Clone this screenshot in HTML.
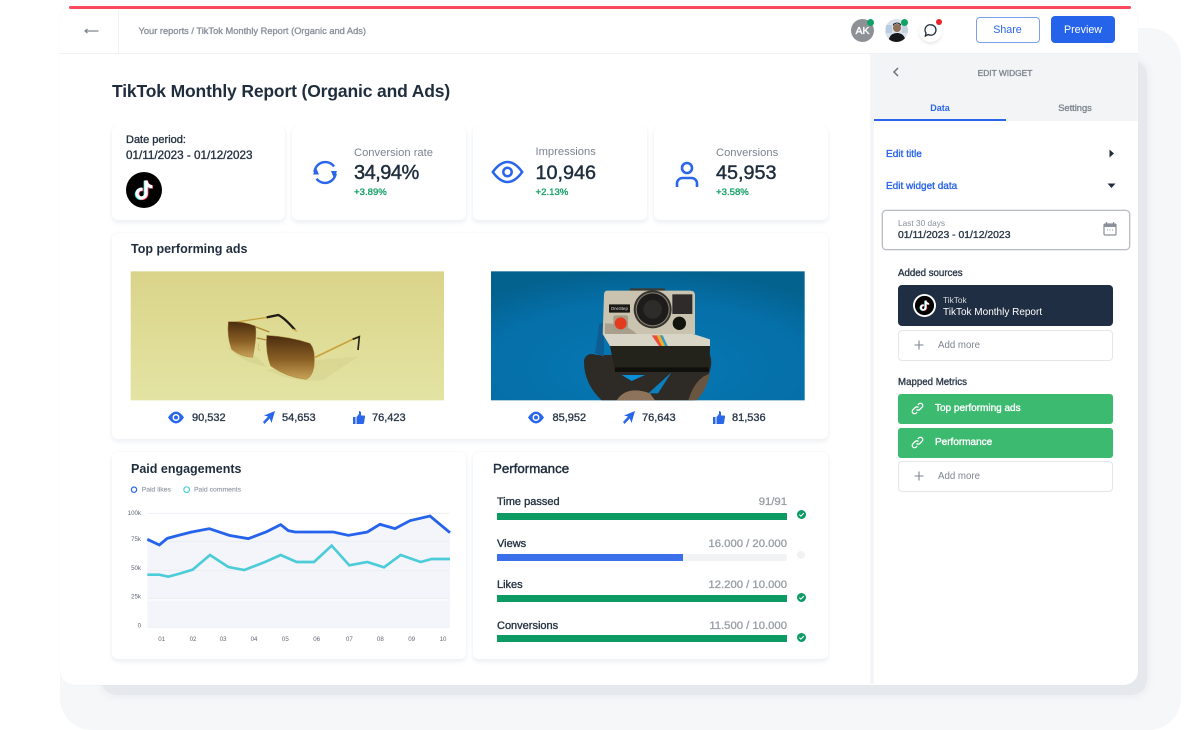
<!DOCTYPE html>
<html><head><meta charset="utf-8"><style>
html,body{margin:0;padding:0;background:#fff}
body{position:relative;width:1200px;height:730px;overflow:hidden;font-family:"Liberation Sans",sans-serif;color:#1f2d3d}
.a{position:absolute}
.t{position:absolute;white-space:nowrap;line-height:14px;height:14px}
.m{-webkit-text-stroke:.35px currentColor}
.card{position:absolute;background:#fff;border-radius:6px;box-shadow:0 3px 5px #eef0f4,0 0 3px #f3f4f7}
.gray{color:#7c8490}.grn{color:#16a267}
svg{position:absolute;overflow:visible}
</style></head><body>
<div class="a" style="left:60px;top:28px;width:1121px;height:702px;background:#f6f7f9;border-radius:32px"></div>
<div class="a" style="left:101px;top:60px;width:1046px;height:635px;background:#e5e8ec;border-radius:16px;box-shadow:0 0 6px 3px #edeff2"></div>
<div class="a" style="left:60px;top:5px;width:1078px;height:680px;background:#fff;border-radius:14px;box-shadow:0 0 1px #dfe2e6"></div>
<div class="a" style="left:69px;top:6px;width:1062px;height:2.5px;background:#fb4a5c;border-radius:2px"></div>

<!-- header -->
<div class="a" style="left:60px;top:53px;width:1078px;height:1px;background:#f0f1f3"></div>
<div class="a" style="left:118px;top:10px;width:1px;height:43px;background:#f0f1f3"></div>
<svg style="left:84px;top:26px" width="15" height="10" viewBox="0 0 15 10"><path d="M14.5 5H1M3.500 3L1 5l2.500 2" fill="none" stroke="#7f8791" stroke-width="1.300"/></svg>
<div class="t m" style="left:138.5px;top:23.500px;font-size:9.300px;color:#8b929c">Your reports / TikTok Monthly Report (Organic and Ads)</div>

<div class="a m" style="left:851px;top:19px;width:23px;height:23px;border-radius:50%;background:#8d9196;color:#fff;font-size:10.500px;line-height:24px;text-align:center">AK</div>
<div class="a" style="left:867px;top:18.5px;width:7px;height:7px;border-radius:50%;background:#10a265"></div>
<svg style="left:885px;top:19px" width="23" height="23" viewBox="0 0 23 23"><defs><clipPath id="av"><circle cx="11.5" cy="11.5" r="11.5"/></clipPath></defs><g clip-path="url(#av)"><rect width="23" height="23" fill="#d9e2ea"/><rect x="1" y="6" width="6" height="8" fill="#b9cbe0"/><rect x="17" y="5" width="6" height="9" fill="#c5d3df"/><circle cx="12" cy="9" r="4" fill="#8f6f58"/><path d="M8 7q4-5 8 0l0-2q-4-3-8 0z" fill="#222"/><path d="M3 24q1-10 9-10t9 10z" fill="#15171a"/></g></svg>
<div class="a" style="left:901px;top:18.5px;width:7px;height:7px;border-radius:50%;background:#10a265"></div>
<div class="a" style="left:919px;top:19px;width:23px;height:23px;border-radius:50%;background:#fff;box-shadow:0 2px 3px #e6e8ec"></div>
<svg style="left:923px;top:23px" width="15" height="15" viewBox="0 0 15 15"><path d="M7.8 1.8a5.2 5.2 0 0 1 0 10.4c-1 0-1.900-.3-2.700-.7L2.400 13l.6-3a5.200 5.200 0 0 1 4.800-8.200z" fill="none" stroke="#1f2d3d" stroke-width="1.300"/></svg>
<div class="a" style="left:935.5px;top:19px;width:6px;height:6px;border-radius:50%;background:#e8262a"></div>

<div class="a" style="left:975.5px;top:16.5px;width:62px;height:24px;border:1px solid #7aa0ef;border-radius:4px;color:#2a66ea;font-size:10.700px;line-height:25px;text-align:center">Share</div>
<div class="a" style="left:1051px;top:16px;width:64px;height:27px;background:#2563eb;border-radius:4px;color:#fff;font-size:10.700px;line-height:28px;text-align:center">Preview</div>

<!-- title -->
<div class="t" style="left:112px;top:83px;font-size:17.500px;letter-spacing:-.15px;color:#1f2d3d;font-weight:bold;line-height:16px">TikTok Monthly Report (Organic and Ads)</div>

<!-- KPI cards -->
<div class="card" style="left:112px;top:126px;width:173px;height:94px"></div>
<div class="card" style="left:292px;top:126px;width:174px;height:94px"></div>
<div class="card" style="left:473px;top:126px;width:174px;height:94px"></div>
<div class="card" style="left:654px;top:126px;width:174px;height:94px"></div>
<div class="a" style="left:100px;top:118px;width:740px;height:8px;background:#fff"></div>

<div class="t m" style="left:126px;top:133px;font-size:11px;color:#253342">Date period:</div>
<div class="t m" style="left:126px;top:149px;font-size:11.700px;color:#253342">01/11/2023 - 01/12/2023</div>
<svg style="left:126px;top:172px" width="36" height="36" viewBox="0 0 36 36"><circle cx="18" cy="18" r="18" fill="#000"/><g transform="translate(6.500 6.500) scale(.96)"><path transform="translate(-.8 .5)" d="M19.59 6.69a4.83 4.83 0 0 1-3.77-4.25V2h-3.45v13.67a2.89 2.89 0 0 1-5.2 1.74 2.89 2.89 0 0 1 2.31-4.64 2.93 2.93 0 0 1 .88.13V9.4a6.84 6.84 0 0 0-1-.05A6.33 6.33 0 0 0 5 20.1a6.34 6.34 0 0 0 10.86-4.43v-7a8.16 8.16 0 0 0 4.77 1.52v-3.4a4.85 4.85 0 0 1-1-.1z" fill="#25f4ee"/><path transform="translate(.8 .5)" d="M19.59 6.69a4.83 4.83 0 0 1-3.77-4.25V2h-3.45v13.67a2.89 2.89 0 0 1-5.2 1.74 2.89 2.89 0 0 1 2.31-4.64 2.93 2.93 0 0 1 .88.13V9.4a6.84 6.84 0 0 0-1-.05A6.33 6.33 0 0 0 5 20.1a6.34 6.34 0 0 0 10.86-4.43v-7a8.16 8.16 0 0 0 4.77 1.52v-3.4a4.85 4.85 0 0 1-1-.1z" fill="#fe2c55"/><path d="M19.59 6.69a4.83 4.83 0 0 1-3.77-4.25V2h-3.45v13.67a2.89 2.89 0 0 1-5.2 1.74 2.89 2.89 0 0 1 2.31-4.64 2.93 2.93 0 0 1 .88.13V9.4a6.84 6.84 0 0 0-1-.05A6.33 6.33 0 0 0 5 20.1a6.34 6.34 0 0 0 10.86-4.43v-7a8.16 8.16 0 0 0 4.77 1.52v-3.4a4.85 4.85 0 0 1-1-.1z" fill="#fff"/></g></svg>

<div class="t gray" style="left:354px;top:146px;font-size:11.200px">Conversion rate</div>
<div class="t" style="left:354px;top:166px;font-size:20px;letter-spacing:-.5px;color:#1f2d3d;-webkit-text-stroke:.45px #1f2d3d">34,94%</div>
<div class="t m grn" style="left:354px;top:186px;font-size:9.600px">+3.89%</div>
<svg style="left:311px;top:158px" width="28" height="28" viewBox="0 0 28 28"><g fill="none" stroke="#2a66ea" stroke-width="2.400"><path d="M3.500 14A10.800 10.800 0 0 1 23 8.500"/><path d="M24.700 15.500A10.800 10.800 0 0 1 5.500 20.800"/></g><path d="M2 16.500H8L5 9.500z" fill="#2a66ea"/><path d="M20 13H26L23 20.500z" fill="#2a66ea"/></svg>

<div class="t gray" style="left:535.5px;top:145px;font-size:11.200px">Impressions</div>
<div class="t" style="left:535.5px;top:166px;font-size:19.800px;color:#1f2d3d;-webkit-text-stroke:.45px #1f2d3d">10,946</div>
<div class="t m grn" style="left:535.5px;top:186px;font-size:9.600px">+2.13%</div>
<svg style="left:491px;top:160px" width="33" height="24" viewBox="0 0 33 24"><path d="M1.800 12Q9 2 16.500 2T31.200 12Q24 22 16.500 22T1.800 12z" fill="none" stroke="#2a66ea" stroke-width="2.500"/><circle cx="16.500" cy="12" r="4.200" fill="none" stroke="#2a66ea" stroke-width="2.500"/></svg>

<div class="t gray" style="left:716px;top:146px;font-size:11.200px">Conversions</div>
<div class="t" style="left:716px;top:166px;font-size:19.800px;color:#1f2d3d;-webkit-text-stroke:.45px #1f2d3d">45,953</div>
<div class="t m grn" style="left:716px;top:186px;font-size:9.600px">+3.58%</div>
<svg style="left:674px;top:160px" width="26" height="28" viewBox="0 0 26 28"><circle cx="13" cy="8" r="5" fill="none" stroke="#2a66ea" stroke-width="2.600"/><path d="M3 27v-3.500a5.500 5.500 0 0 1 5.500-5.500h9a5.500 5.500 0 0 1 5.500 5.500V27" fill="none" stroke="#2a66ea" stroke-width="2.600"/></svg>

<!-- Top performing ads -->
<div class="card" style="left:112px;top:233px;width:716px;height:206px"></div>
<div class="t" style="left:131px;top:242px;font-size:12.500px;font-weight:bold;color:#1f2d3d">Top performing ads</div>

<svg style="left:110px;top:260px" width="360" height="190" viewBox="0 0 1080 570">
<defs>
<linearGradient id="yb" x1="0" y1="0" x2="0" y2="1"><stop offset="0" stop-color="#dad48a"/><stop offset=".5" stop-color="#dfdc96"/><stop offset="1" stop-color="#e3e3a3"/></linearGradient>
<linearGradient id="ln" x1="0" y1="0" x2="0" y2="1"><stop offset="0" stop-color="#4a2c0e"/><stop offset=".55" stop-color="#8a5f25"/><stop offset="1" stop-color="#c9a358"/></linearGradient>
</defs>
<rect x="62" y="34" width="940" height="387" fill="url(#yb)"/>
<path d="M470 330Q560 372 640 360L745 290 620 300z" fill="#c9c67e" opacity=".3"/>
<path d="M350 260Q400 310 470 320L440 290z" fill="#c9c67e" opacity=".35"/>
<path d="M380 186L472 172" stroke="#c9a23c" stroke-width="4" fill="none"/>
<path d="M470 172L505 165Q525 175 555 210" stroke="#1e1a12" stroke-width="7" fill="none"/>
<path d="M548 208l14 6" stroke="#d8b45a" stroke-width="5"/>
<path d="M615 292L732 236" stroke="#c9a23c" stroke-width="5" fill="none"/>
<path d="M728 238L748 230 744 270" stroke="#2a2315" stroke-width="5" fill="none"/>
<path d="M435 200L478 216M440 234L470 240" stroke="#b08a35" stroke-width="4" fill="none"/>
<path d="M355 185Q400 183 436 198 442 225 428 292 390 290 365 268 350 230 355 185z" fill="url(#ln)" stroke="#a8863c" stroke-width="1.500"/>
<path d="M470 226Q540 230 600 250 618 270 612 320 606 352 588 358 530 352 482 318 466 280 470 226z" fill="url(#ln)" stroke="#a8863c" stroke-width="1.500"/>
<path d="M446 250l-2 18 8 4" stroke="#d6c27a" stroke-width="3" fill="none"/>
</svg>

<svg style="left:480px;top:260px" width="350" height="190" viewBox="0 0 1050 570">
<defs>
<radialGradient id="bl" cx=".5" cy=".75" r=".75"><stop offset="0" stop-color="#0578b5"/><stop offset=".7" stop-color="#056fa8"/><stop offset="1" stop-color="#04628f"/></radialGradient>
<clipPath id="cc"><rect x="33" y="34" width="941" height="387"/></clipPath>
</defs>
<rect x="33" y="34" width="941" height="387" fill="url(#bl)"/>
<g clip-path="url(#cc)">
<path d="M312 300Q320 275 350 285L690 285Q700 310 685 345 670 390 640 421L365 421Q310 370 312 300z" fill="#2e2a26"/>
<path d="M410 421Q440 375 510 400L525 421z" fill="#8d7359"/>
<path d="M625 421Q640 370 670 350L690 340Q680 390 650 421z" fill="#6a5540"/>
<path d="M425 345l70 0-40 18z" fill="#0a8ed6"/><path d="M505 400l55-50 14-12-40 62z" fill="#0c7fbd"/>
<path d="M358 190L372 190 372 290 345 280z" fill="#0d5c92"/>
<rect x="450" y="85" width="105" height="12" fill="#3a3a36"/>
<path d="M382 92H630Q645 92 645 105V222H368L372 105Q372 92 382 92z" fill="#c9c3b0"/>
<path d="M375 190Q440 190 470 222H375z" fill="#a89f8c"/>
<path d="M368 222H640L690 238V258H390z" fill="#d8d4c6"/>
<path d="M390 258H690L688 335H405z" fill="#23231c"/>
<path d="M405 322H686V336H405z" fill="#0f0f0c"/>
<path d="M515 226l32 0 16 32-26 0z" fill="#e9503a"/><path d="M530 226l10 0 16 32-11 0z" fill="#e8b02e"/><path d="M541 226l7 0 15 32-8 0z" fill="#2a9fc9"/>
<circle cx="518" cy="148" r="57" fill="#35332e"/><circle cx="518" cy="148" r="51" fill="#8d8778"/><circle cx="518" cy="148" r="48" fill="#1d1c1a"/><circle cx="518" cy="148" r="28" fill="#2d2c28"/>
<rect x="577" y="103" width="60" height="59" fill="#2e2b2b"/>
<circle cx="598" cy="190" r="20" fill="#14140f"/>
<rect x="387" y="133" width="63" height="25" rx="2" fill="#1b1a17"/>
<text x="418" y="150" font-size="13" fill="#ddd" text-anchor="middle" font-family="Liberation Sans">OneStep</text>
<rect x="400" y="166" width="44" height="46" rx="6" fill="#a59c88"/><circle cx="422" cy="190" r="18" fill="#e43a1e"/>
</g>
</svg>

<!-- stats -->
<svg style="left:168px;top:411px" width="16" height="13" viewBox="0 0 16 13"><path fill-rule="evenodd" d="M0 6.500Q4 .5 8 .5t8 6q-4 6-8 6t-8-6zM8 3a3.500 3.500 0 1 0 0 7 3.500 3.500 0 0 0 0-7z" fill="#2a66ea"/><circle cx="8" cy="6.500" r="2" fill="#2a66ea"/></svg>
<div class="t m" style="left:192px;top:410.500px;font-size:11px;color:#2b3848">90,532</div>
<svg style="left:263px;top:411px" width="12" height="13" viewBox="0 0 12 13"><path d="M12 0L8.500 12 6.800 7.500 1.500 13 0 11 5 5.500 1 4.500z" fill="#2a66ea"/></svg>
<div class="t m" style="left:282px;top:410.500px;font-size:11px;color:#2b3848">54,653</div>
<svg style="left:353px;top:411px" width="12" height="13" viewBox="0 0 12 13"><path d="M0 6h2.500v7H0zM3.500 6L6 3V0q2 0 2 2v2.500h3q1.200 0 1 1.500l-1 6q-.2 1-1.200 1H3.500z" fill="#2a66ea"/></svg>
<div class="t m" style="left:372px;top:410.500px;font-size:11px;color:#2b3848">76,423</div>

<svg style="left:528px;top:411px" width="16" height="13" viewBox="0 0 16 13"><path fill-rule="evenodd" d="M0 6.500Q4 .5 8 .5t8 6q-4 6-8 6t-8-6zM8 3a3.500 3.500 0 1 0 0 7 3.500 3.500 0 0 0 0-7z" fill="#2a66ea"/><circle cx="8" cy="6.500" r="2" fill="#2a66ea"/></svg>
<div class="t m" style="left:552.5px;top:410.500px;font-size:11px;color:#2b3848">85,952</div>
<svg style="left:623px;top:411px" width="12" height="13" viewBox="0 0 12 13"><path d="M12 0L8.500 12 6.800 7.500 1.500 13 0 11 5 5.500 1 4.500z" fill="#2a66ea"/></svg>
<div class="t m" style="left:642px;top:410.500px;font-size:11px;color:#2b3848">76,643</div>
<svg style="left:713px;top:411px" width="12" height="13" viewBox="0 0 12 13"><path d="M0 6h2.500v7H0zM3.500 6L6 3V0q2 0 2 2v2.500h3q1.200 0 1 1.500l-1 6q-.2 1-1.200 1H3.500z" fill="#2a66ea"/></svg>
<div class="t m" style="left:732px;top:410.500px;font-size:11px;color:#2b3848">81,536</div>

<!-- Paid engagements -->
<div class="card" style="left:112px;top:452px;width:354px;height:207px"></div>
<div class="t" style="left:131px;top:462px;font-size:12.500px;font-weight:bold;color:#1f2d3d">Paid engagements</div>
<svg style="left:110px;top:450px" width="360" height="220" viewBox="0 0 1080 660" font-family="Liberation Sans">
<circle cx="72" cy="119" r="8" fill="none" stroke="#2a66ea" stroke-width="3.500"/>
<text x="95" y="125" font-size="20.500" fill="#9aa0aa" stroke="#9aa0aa" stroke-width=".6">Paid likes</text>
<circle cx="230" cy="119" r="8.500" fill="none" stroke="#4ccbd8" stroke-width="3.500"/>
<text x="252" y="125" font-size="20.500" fill="#9aa0aa" stroke="#9aa0aa" stroke-width=".6">Paid comments</text>
<path d="M112 268L148 285 172 265 205 256 245 246 298 236 358 256 415 266 470 245 512 224 535 242 555 246 610 246 670 246 715 256 772 246 810 223 855 236 900 212 960 198 1020 248V533H112z" fill="#f4f5fa"/>
<g stroke="#eceef2" stroke-width="3" fill="none"><path d="M112 190H1018M112 275H1018M112 361H1018M112 445H1018"/></g>
<path d="M112 450H1018" stroke="#fff" stroke-width="3"/>
<path d="M112 533H1018" stroke="#eceef2" stroke-width="1.500"/>
<path d="M112 268L148 285 172 265 205 256 245 246 298 236 358 256 415 266 470 245 512 224 535 242 555 246 610 246 670 246 715 256 772 246 810 223 855 236 900 212 960 198 1020 248" fill="none" stroke="#2563eb" stroke-width="8.500"/>
<path d="M112 374L148 374 175 380 205 372 248 359 300 315 355 351 403 360 465 336 512 315 560 336 612 336 665 287 718 346 772 336 822 352 872 315 932 336 965 327 1020 327" fill="none" stroke="#4ccbd8" stroke-width="8"/>
<g font-size="18.500" fill="#5f6773" text-anchor="end">
<text x="93" y="195">100k</text><text x="93" y="273">75k</text><text x="93" y="360">50k</text><text x="93" y="446">25k</text><text x="93" y="532">0</text></g>
<g font-size="18.500" fill="#5f6773" text-anchor="middle">
<text x="155" y="573">01</text><text x="249" y="573">02</text><text x="339" y="573">03</text><text x="432" y="573">04</text><text x="526" y="573">05</text><text x="620" y="573">06</text><text x="718" y="573">07</text><text x="811" y="573">08</text><text x="905" y="573">09</text><text x="999" y="573">10</text></g>
</svg>

<!-- Performance -->
<div class="card" style="left:473px;top:452px;width:355px;height:207px"></div>
<div class="t" style="left:493px;top:462px;font-size:13.300px;-webkit-text-stroke:.45px #1f2d3d;color:#1f2d3d">Performance</div>

<div class="t m" style="left:497px;top:494.500px;font-size:11px;color:#253342">Time passed</div>
<div class="t m" style="right:413px;top:494.500px;font-size:11.300px;color:#9a9fa6">91/91</div>
<div class="a" style="left:497px;top:512.5px;width:290px;height:7px;background:#0b9b63"></div>

<div class="t m" style="left:497px;top:536.500px;font-size:11px;color:#253342">Views</div>
<div class="t m" style="right:413px;top:536.500px;font-size:11.300px;color:#9a9fa6">16.000 / 20.000</div>
<div class="a" style="left:497px;top:554px;width:290px;height:7px;background:#f2f3f5;border-radius:2px"></div>
<div class="a" style="left:497px;top:554px;width:186px;height:7px;background:#3b70ea"></div>

<div class="t m" style="left:497px;top:577.500px;font-size:11px;color:#253342">Likes</div>
<div class="t m" style="right:413px;top:577.500px;font-size:11.300px;color:#9a9fa6">12.200 / 10.000</div>
<div class="a" style="left:497px;top:594.500px;width:290px;height:7px;background:#0b9b63"></div>

<div class="t m" style="left:497px;top:618.500px;font-size:11px;color:#253342">Conversions</div>
<div class="t m" style="right:413px;top:618.500px;font-size:11.300px;color:#9a9fa6">11.500 / 10.000</div>
<div class="a" style="left:497px;top:635px;width:290px;height:7px;background:#0b9b63"></div>

<svg style="left:796.500px;top:510px" width="9" height="9" viewBox="0 0 9 9"><circle cx="4.500" cy="4.500" r="4.500" fill="#0b9b63"/><path d="M2.300 4.600l1.600 1.500 2.900-3" fill="none" stroke="#fff" stroke-width="1.100"/></svg>
<div class="a" style="left:796.500px;top:551px;width:8px;height:8px;border-radius:50%;background:#f0f1f3"></div>
<svg style="left:796.500px;top:592.500px" width="9" height="9" viewBox="0 0 9 9"><circle cx="4.500" cy="4.500" r="4.500" fill="#0b9b63"/><path d="M2.300 4.600l1.600 1.500 2.900-3" fill="none" stroke="#fff" stroke-width="1.100"/></svg>
<svg style="left:796.500px;top:632.500px" width="9" height="9" viewBox="0 0 9 9"><circle cx="4.500" cy="4.500" r="4.500" fill="#0b9b63"/><path d="M2.300 4.600l1.600 1.500 2.900-3" fill="none" stroke="#fff" stroke-width="1.100"/></svg>

<!-- Right panel -->
<div class="a" style="left:870px;top:54px;width:4px;height:630px;background:#f4f5f8"></div>
<div class="a" style="left:874px;top:54px;width:264px;height:67px;background:#f3f4f6"></div>
<svg style="left:892px;top:67px" width="8" height="10" viewBox="0 0 8 10"><path d="M6 1L2 5l4 4" fill="none" stroke="#6b727c" stroke-width="1.500"/></svg>
<div class="t m" style="left:874px;top:65.500px;width:262px;text-align:center;font-size:8.400px;color:#7f8791">EDIT WIDGET</div>
<div class="t" style="left:874px;top:101px;width:132px;text-align:center;font-size:9px;font-weight:bold;color:#2a66ea">Data</div>
<div class="t m" style="left:1006px;top:101px;width:138px;text-align:center;font-size:9.300px;color:#7f8791">Settings</div>
<div class="a" style="left:874px;top:119px;width:132px;height:2px;background:#2a66ea"></div>

<div class="t m" style="left:886px;top:147.500px;font-size:10.100px;color:#2a66ea">Edit title</div>
<svg style="left:1108px;top:149px" width="7" height="9" viewBox="0 0 7 9"><path d="M1.500.5L6 4.500 1.500 8.500z" fill="#1f2d3d"/></svg>
<div class="t m" style="left:886px;top:179.500px;font-size:10px;color:#2a66ea">Edit widget data</div>
<svg style="left:1107px;top:183px" width="9" height="6" viewBox="0 0 9 6"><path d="M.5.500h8L4.500 5z" fill="#1f2d3d"/></svg>

<div class="a" style="left:882px;top:210px;width:246px;height:38px;border:1px solid #b8bcc2;border-radius:4px;box-shadow:0 0 0 .4px #c8ccd1"></div>
<div class="t" style="left:898px;top:216px;font-size:8.300px;color:#8a9099">Last 30 days</div>
<div class="t m" style="left:898px;top:228.500px;font-size:10.400px;color:#2b3848">01/11/2023 - 01/12/2023</div>
<svg style="left:1103px;top:222px" width="14" height="14" viewBox="0 0 14 14"><rect x="1" y="2" width="12" height="11" rx="1" fill="#fff" stroke="#8a9099" stroke-width="1.200"/><rect x="1" y="2" width="12" height="3" fill="#8a9099"/><path d="M3.500 0v3M10.500 0v3" stroke="#8a9099" stroke-width="1.200"/><path d="M4 8h1M6.500 8h1M9 8h1" stroke="#8a9099" stroke-width="1"/></svg>

<div class="t m" style="left:898px;top:266.500px;font-size:9.700px;color:#2d3a4a">Added sources</div>
<div class="a" style="left:897.5px;top:285px;width:215.500px;height:41px;background:#1f2e42;border-radius:4px"></div>
<svg style="left:913px;top:294px" width="23" height="23" viewBox="0 0 36 36"><circle cx="18" cy="18" r="18" fill="#fff"/><circle cx="18" cy="18" r="15" fill="#000"/><g transform="translate(8.500 8.500) scale(.8)"><path transform="translate(-1 .5)" d="M19.59 6.69a4.83 4.83 0 0 1-3.77-4.25V2h-3.45v13.67a2.89 2.89 0 0 1-5.2 1.74 2.89 2.89 0 0 1 2.31-4.64 2.93 2.93 0 0 1 .88.13V9.4a6.84 6.84 0 0 0-1-.05A6.33 6.33 0 0 0 5 20.1a6.34 6.34 0 0 0 10.86-4.43v-7a8.16 8.16 0 0 0 4.77 1.52v-3.4a4.85 4.85 0 0 1-1-.1z" fill="#25f4ee"/><path transform="translate(1 .5)" d="M19.59 6.69a4.83 4.83 0 0 1-3.77-4.25V2h-3.45v13.67a2.89 2.89 0 0 1-5.2 1.74 2.89 2.89 0 0 1 2.31-4.64 2.93 2.93 0 0 1 .88.13V9.4a6.84 6.84 0 0 0-1-.05A6.33 6.33 0 0 0 5 20.1a6.34 6.34 0 0 0 10.86-4.43v-7a8.16 8.16 0 0 0 4.77 1.52v-3.4a4.85 4.85 0 0 1-1-.1z" fill="#fe2c55"/><path d="M19.59 6.69a4.83 4.83 0 0 1-3.77-4.25V2h-3.45v13.67a2.89 2.89 0 0 1-5.2 1.74 2.89 2.89 0 0 1 2.31-4.64 2.93 2.93 0 0 1 .88.13V9.4a6.84 6.84 0 0 0-1-.05A6.33 6.33 0 0 0 5 20.1a6.34 6.34 0 0 0 10.86-4.43v-7a8.16 8.16 0 0 0 4.77 1.52v-3.4a4.85 4.85 0 0 1-1-.1z" fill="#fff"/></g></svg>
<div class="t" style="left:943px;top:292.500px;font-size:8.300px;color:#d8dbe0">TikTok</div>
<div class="t" style="left:943px;top:305.500px;font-size:10px;color:#fff">TikTok Monthly Report</div>

<div class="a" style="left:897.5px;top:330px;width:213.500px;height:28.500px;border:1px solid #e4e6ea;border-radius:4px;background:#fff"></div>
<svg style="left:914px;top:340px" width="10" height="10" viewBox="0 0 10 10"><path d="M5 .5v9M.5 5h9" stroke="#7e8590" stroke-width="1.100"/></svg>
<div class="t" style="left:938px;top:338.500px;font-size:9.700px;color:#7e8590">Add more</div>

<div class="t m" style="left:898px;top:375.500px;font-size:9.700px;color:#2d3a4a">Mapped Metrics</div>
<div class="a" style="left:897.5px;top:393.500px;width:215.500px;height:30.500px;background:#3cba6f;border-radius:3px"></div>
<div class="t m" style="left:935px;top:402px;font-size:10px;color:#fff">Top performing ads</div>
<div class="a" style="left:897.5px;top:427.500px;width:215.500px;height:30.500px;background:#3cba6f;border-radius:3px"></div>
<div class="t m" style="left:935px;top:436px;font-size:10px;color:#fff">Performance</div>
<svg style="left:911px;top:402px" width="13" height="13" viewBox="0 0 13 13"><g fill="none" stroke="#fff" stroke-width="1.300"><path d="M5.500 7.500a2.300 2.300 0 0 0 3.300 0l2.300-2.300a2.300 2.300 0 0 0-3.300-3.300l-1 1"/><path d="M7.500 5.500a2.300 2.300 0 0 0-3.300 0L1.900 7.800a2.300 2.300 0 0 0 3.300 3.300l1-1"/></g></svg>
<svg style="left:911px;top:436px" width="13" height="13" viewBox="0 0 13 13"><g fill="none" stroke="#fff" stroke-width="1.300"><path d="M5.500 7.500a2.300 2.300 0 0 0 3.300 0l2.300-2.300a2.300 2.300 0 0 0-3.300-3.300l-1 1"/><path d="M7.500 5.500a2.300 2.300 0 0 0-3.300 0L1.900 7.800a2.300 2.300 0 0 0 3.300 3.300l1-1"/></g></svg>

<div class="a" style="left:897.5px;top:461px;width:213.500px;height:28.500px;border:1px solid #e4e6ea;border-radius:4px;background:#fff"></div>
<svg style="left:914px;top:471px" width="10" height="10" viewBox="0 0 10 10"><path d="M5 .5v9M.5 5h9" stroke="#7e8590" stroke-width="1.100"/></svg>
<div class="t" style="left:938px;top:469.500px;font-size:9.700px;color:#7e8590">Add more</div>
</body></html>
